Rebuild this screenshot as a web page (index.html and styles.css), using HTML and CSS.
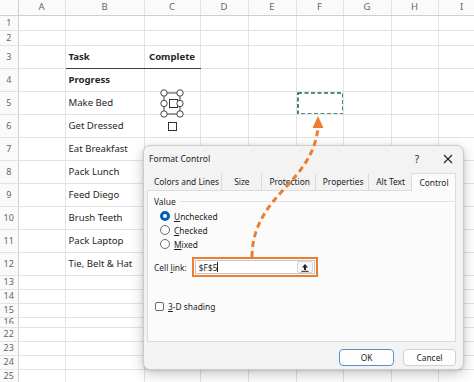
FILE: index.html
```html
<!DOCTYPE html>
<html>
<head>
<meta charset="utf-8">
<link rel="stylesheet" href="styles.css">
</head>
<body>
<div class="app">
  <table class="sheet">
    <colgroup>
      <col class="w-hd"><col class="w-a"><col class="w-b"><col class="w-c"><col class="w-d"><col class="w-e"><col class="w-f"><col class="w-g"><col class="w-h"><col class="w-i">
    </colgroup>
    <tr class="r-hdr"><th class="corner"></th><th>A</th><th>B</th><th>C</th><th>D</th><th>E</th><th>F</th><th>G</th><th>H</th><th>I</th></tr>
    <tr class="r-sm"><th>1</th><td></td><td></td><td></td><td></td><td></td><td></td><td></td><td></td><td></td></tr>
    <tr class="r-sm"><th>2</th><td></td><td></td><td></td><td></td><td></td><td></td><td></td><td></td><td></td></tr>
    <tr class="r-lg"><th>3</th><td></td><td class="bold under">Task</td><td class="bold under center">Complete</td><td></td><td></td><td></td><td></td><td></td><td></td></tr>
    <tr class="r-lg"><th>4</th><td></td><td class="bold">Progress</td><td></td><td></td><td></td><td></td><td></td><td></td><td></td></tr>
    <tr class="r-lg"><th>5</th><td></td><td>Make Bed</td><td class="sel-cell"><svg class="handles" width="56" height="23" viewBox="0 0 56 23"><rect x="19" y="1" width="16" height="21" fill="none" stroke="#444" stroke-width="1"/><rect x="24.5" y="7.5" width="8" height="8" fill="#fff" stroke="#333" stroke-width="1"/><g fill="#fff" stroke="#444" stroke-width="1"><circle cx="19" cy="1" r="3.2"/><circle cx="35" cy="1" r="3.2"/><circle cx="19" cy="11.5" r="3.2"/><circle cx="35" cy="11.5" r="3.2"/><circle cx="19" cy="22" r="3.2"/><circle cx="35" cy="22" r="3.2"/></g></svg></td><td></td><td></td><td class="marquee"><svg class="ants" width="47" height="23" viewBox="0 0 47 23"><rect x="1" y="1" width="45" height="21" fill="none" stroke="#1d6b45" stroke-width="1.6" stroke-dasharray="4 2.5"/></svg></td><td></td><td></td><td></td></tr>
    <tr class="r-lg"><th>6</th><td></td><td>Get Dressed</td><td class="center"><span class="box"></span></td><td></td><td></td><td></td><td></td><td></td><td></td></tr>
    <tr class="r-lg"><th>7</th><td></td><td>Eat Breakfast</td><td class="center"><span class="box"></span></td><td></td><td></td><td></td><td></td><td></td><td></td></tr>
    <tr class="r-lg"><th>8</th><td></td><td>Pack Lunch</td><td class="center"><span class="box"></span></td><td></td><td></td><td></td><td></td><td></td><td></td></tr>
    <tr class="r-lg"><th>9</th><td></td><td>Feed Diego</td><td class="center"><span class="box"></span></td><td></td><td></td><td></td><td></td><td></td><td></td></tr>
    <tr class="r-lg"><th>10</th><td></td><td>Brush Teeth</td><td class="center"><span class="box"></span></td><td></td><td></td><td></td><td></td><td></td><td></td></tr>
    <tr class="r-lg"><th>11</th><td></td><td>Pack Laptop</td><td class="center"><span class="box"></span></td><td></td><td></td><td></td><td></td><td></td><td></td></tr>
    <tr class="r-12"><th>12</th><td></td><td>Tie, Belt &amp; Hat</td><td class="center"><span class="box"></span></td><td></td><td></td><td></td><td></td><td></td><td></td></tr>
    <tr class="r-xs"><th>13</th><td></td><td></td><td></td><td></td><td></td><td></td><td></td><td></td><td></td></tr>
    <tr class="r-xs"><th>14</th><td></td><td></td><td></td><td></td><td></td><td></td><td></td><td></td><td></td></tr>
    <tr class="r-xs"><th>15</th><td></td><td></td><td></td><td></td><td></td><td></td><td></td><td></td><td></td></tr>
    <tr class="r-cut"><th><span class="cut">16</span></th><td></td><td></td><td></td><td></td><td></td><td></td><td></td><td></td><td></td></tr>
    <tr class="r-xs"><th>22</th><td></td><td></td><td></td><td></td><td></td><td></td><td></td><td></td><td></td></tr>
    <tr class="r-xs"><th>23</th><td></td><td></td><td></td><td></td><td></td><td></td><td></td><td></td><td></td></tr>
    <tr class="r-xs"><th>24</th><td></td><td></td><td></td><td></td><td></td><td></td><td></td><td></td><td></td></tr>
    <tr class="r-xs"><th>25</th><td></td><td></td><td></td><td></td><td></td><td></td><td></td><td></td><td></td></tr>
  </table>

  <div class="dialog">
    <div class="titlebar">
      <span class="title">Format Control</span>
      <span class="tb-btns"><span class="help">?</span><svg class="close" width="10" height="10" viewBox="0 0 10 10"><path d="M1 1L9 9M9 1L1 9" stroke="#222" stroke-width="1.1"/></svg></span>
    </div>
    <div class="tabs">
      <span class="tab">Colors and Lines</span>
      <span class="tab">Size</span>
      <span class="tab">Protection</span>
      <span class="tab">Properties</span>
      <span class="tab">Alt Text</span>
      <span class="tab active">Control</span>
    </div>
    <div class="panel">
      <div class="group"><span class="legend">Value</span><span class="rule"></span></div>
      <div class="radios">
        <div class="radio"><span class="rb on"></span><span><u>U</u>nchecked</span></div>
        <div class="radio"><span class="rb"></span><span><u>C</u>hecked</span></div>
        <div class="radio"><span class="rb"></span><span><u>M</u>ixed</span></div>
      </div>
      <div class="link-row">
        <span class="lbl">Cell <u>l</u>ink:</span>
        <div class="link-hl">
          <div class="input">
            <span class="val">$F$5</span><span class="caret"></span>
            <span class="upbtn"><svg width="8" height="9" viewBox="0 0 8 9"><path d="M4 1L1 4.5H3V7H5V4.5H7Z" fill="#222"/><rect x="0.5" y="7.8" width="7" height="1" fill="#222"/></svg></span>
          </div>
        </div>
      </div>
      <div class="check"><span class="cb"></span><span><u>3</u>-D shading</span></div>
    </div>
    <div class="footer">
      <button class="btn ok">OK</button>
      <button class="btn">Cancel</button>
    </div>
  </div>

  <svg class="arrow" width="474" height="382" viewBox="0 0 474 382">
    <path d="M252 257 C252 228 266 208 285 188 C302 170 316 152 318 127" fill="none" stroke="#ED7D31" stroke-width="3" stroke-dasharray="6 4"/>
    <polygon points="318,116 312.5,128 323.5,128" fill="#ED7D31"/>
  </svg>
</div>
</body>
</html>
```

FILE: styles.css
```css
* { box-sizing: border-box; }
html, body { margin: 0; padding: 0; }
body {
  width: 474px;
  height: 382px;
  overflow: hidden;
  background: #fff;
  font-family: "Noto Sans", "Open Sans", sans-serif;
}
.app { position: relative; width: 474px; height: 382px; overflow: hidden; }

.sheet {
  border-collapse: collapse;
  table-layout: fixed;
  width: 485px;
  font-size: 9.6px;
  color: #262626;
}
.w-hd { width: 18px; }
.w-a { width: 47px; }
.w-b { width: 79px; }
.w-c { width: 56px; }
.w-d { width: 48px; }
.w-e { width: 48px; }
.w-f { width: 47px; }
.w-g { width: 48px; }
.w-h { width: 47px; }
.w-i { width: 47px; }

.sheet td, .sheet th {
  padding: 0;
  border: 1px solid #e3e3e3;
  border-top: none;
  border-left: none;
  white-space: nowrap;
  overflow: hidden;
  line-height: 12px;
}
.sheet td { padding-left: 3px; vertical-align: middle; padding-top: 1px; }
.sheet th {
  font-weight: normal;
  color: #666;
  font-size: 9px;
  text-align: center;
  background: #fff;
  border-right: 1px solid #cfcfcf;
}
.r-hdr th {
  height: 15px;
  font-size: 9.5px;
  border-bottom: 1px solid #cfcfcf;
  border-right: 1px solid #e3e3e3;
  background: #fafafa;
}
.r-hdr th.corner {
  border-right: 1px solid #cfcfcf;
  background: linear-gradient(135deg, #fafafa 0 62%, #d4d4d4 62% 100%);
}
.sheet tr > th:first-child { background: #fafafa; }
.r-sm td, .r-sm th { height: 15px; }
.r-lg td, .r-lg th { height: 23px; }
.r-12 td, .r-12 th { height: 23px; }
.r-xs td, .r-xs th { height: 14px; }
.r-cut td, .r-cut th { height: 10px; }
.r-cut th { line-height: 8px; vertical-align: top; }
.cut { display: block; height: 6px; overflow: hidden; padding-top: 0; }

.bold { font-weight: bold; }
.sheet td.center { text-align: center; padding-left: 0; }
.sheet td.under { border-bottom: 1px solid #404040; }

.box {
  display: inline-block;
  width: 9px;
  height: 9px;
  border: 1px solid #333;
  background: #fff;
  vertical-align: middle;
}
.sel-cell { position: relative; overflow: visible !important; }
.handles { position: absolute; left: 0; top: 0; overflow: visible; }
.sheet td.marquee { position: relative; padding: 0; }
.ants { position: absolute; left: 0; top: 0; }

/* dialog */
.dialog {
  position: absolute;
  left: 143px;
  top: 145px;
  width: 321px;
  height: 225px;
  background: #f3f3f3;
  border: 1px solid #cbcbcb;
  border-radius: 7px;
  box-shadow: 0 4px 14px rgba(0,0,0,0.22), 0 1px 3px rgba(0,0,0,0.12);
  display: flex;
  flex-direction: column;
  font-size: 8.4px;
  color: #1b1b1b;
  padding: 0 7px 0 3px;
}
.titlebar {
  height: 26px;
  display: flex;
  align-items: center;
  justify-content: space-between;
  padding-left: 2px;
  font-size: 8.6px;
}
.tb-btns { display: flex; align-items: center; gap: 24px; padding-right: 3px; }
.help { font-size: 10px; }
.tabs {
  display: flex;
  align-items: flex-end;
  height: 18px;
  padding-left: 1px;
}
.tab {
  height: 16px;
  line-height: 15px;
  min-width: 40px;
  text-align: center;
  padding: 0 7px;
  border-right: 1px solid #dadada;
  white-space: nowrap;
}
.tab:first-child { padding-left: 6px; padding-right: 6px; }
.tab.active {
  height: 18px;
  line-height: 17px;
  background: #fbfbfb;
  border: 1px solid #dcdcdc;
  border-bottom: none;
  margin-left: -1px;
  padding: 0 8px;
  position: relative;
  top: 1px;
}
.panel {
  height: 152px;
  background: #fbfbfb;
  border: 1px solid #dcdcdc;
  display: flex;
  flex-direction: column;
  padding: 4px 0 0 0;
}
.group { display: flex; align-items: center; height: 12px; padding-left: 6px; gap: 4px; }
.rule { flex: 1; height: 1px; background: #e2e2e2; margin-right: 1px; }
.radios { display: flex; flex-direction: column; margin-top: 2px; }
.radio { display: flex; align-items: center; height: 14px; padding-left: 12px; gap: 4px; }
.rb {
  width: 10px; height: 10px;
  border-radius: 50%;
  border: 1px solid #6b6b6b;
  background: #fff;
}
.rb.on { border: 3px solid #005fb8; background: #fff; }
.link-row { display: flex; align-items: center; margin-top: 6px; padding-left: 6px; gap: 5px; }
.link-hl {
  width: 126px;
  height: 20px;
  border: 2px solid #ED7D31;
  padding: 1px;
}
.input {
  height: 100%;
  background: #fff;
  border: 1px solid #c8c8c8;
  display: flex;
  align-items: center;
  padding-left: 3px;
}
.caret { width: 1px; height: 10px; background: #222; margin-left: 0; }
.upbtn {
  margin-left: auto;
  width: 16px;
  height: 12px;
  border: 1px solid #d6d6d6;
  border-radius: 2px;
  background: #f6f6f6;
  display: flex;
  align-items: center;
  justify-content: center;
  margin-right: 1px;
}
.check { display: flex; align-items: center; gap: 4px; margin-top: 22px; padding-left: 7px; height: 14px; }
.cb {
  width: 9px; height: 9px;
  border: 1px solid #6b6b6b;
  border-radius: 2px;
  background: #fff;
}
.footer {
  flex: 1;
  display: flex;
  justify-content: flex-end;
  align-items: center;
  gap: 9px;
  padding-right: 0;
  padding-top: 3px;
}
.btn {
  font-family: inherit;
  font-size: 8.4px;
  color: #1b1b1b;
  width: 55px;
  height: 17px;
  background: #fefefe;
  border: 1px solid #d0d0d0;
  border-radius: 4px;
  padding: 0;
}
.btn.ok { border-color: #5a8fc8; }
.btn:last-child { width: 53px; }

.arrow { position: absolute; left: 0; top: 0; pointer-events: none; }
```
